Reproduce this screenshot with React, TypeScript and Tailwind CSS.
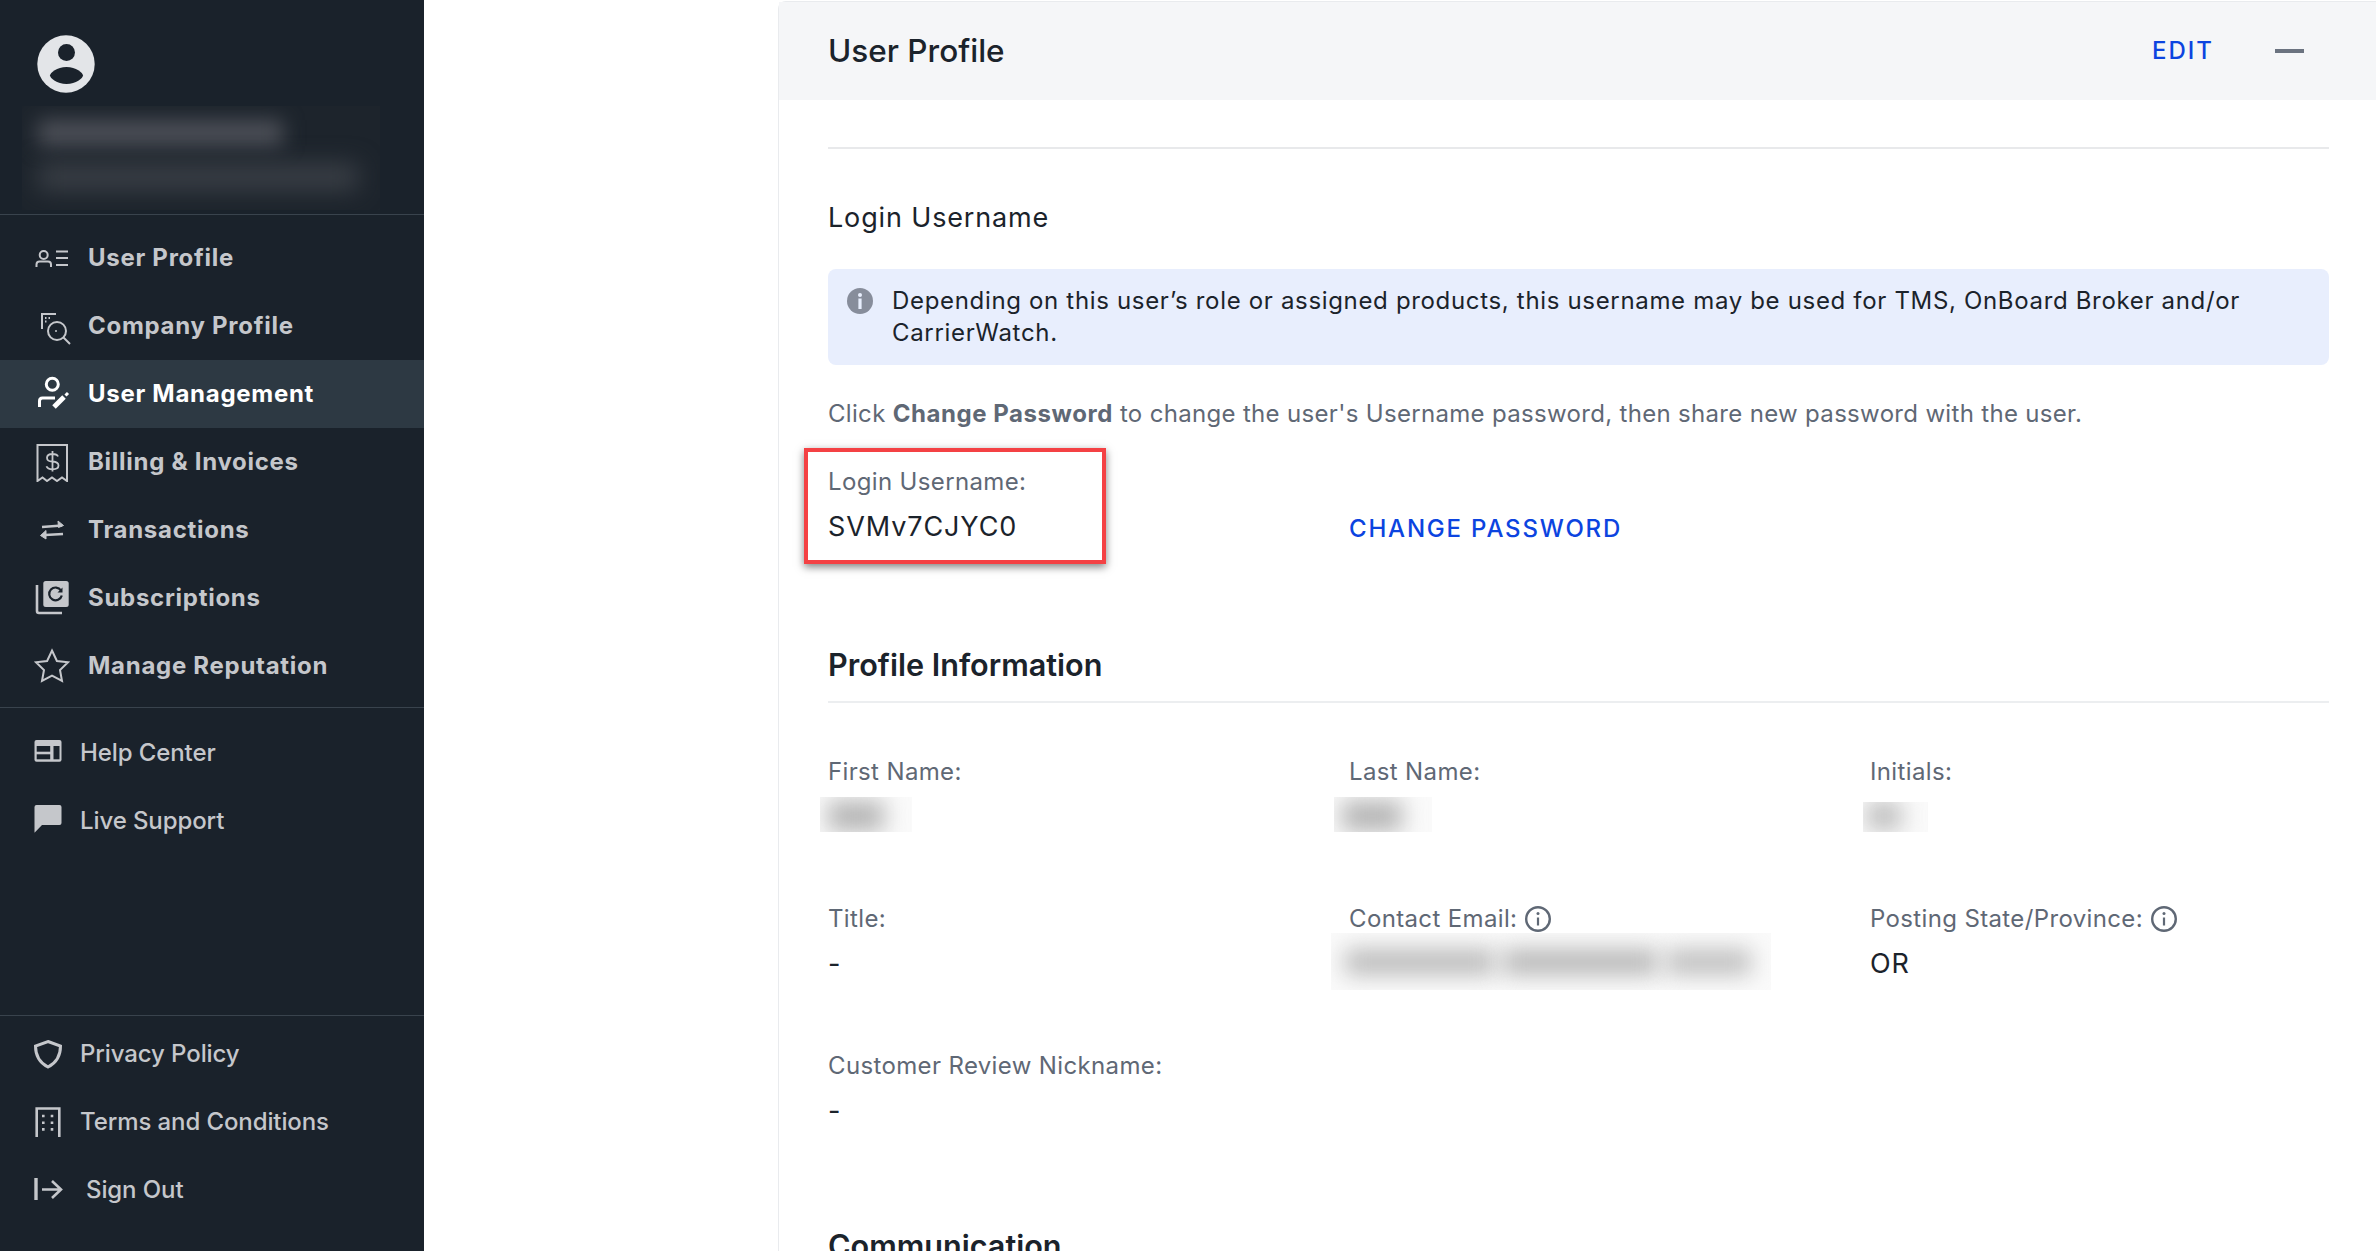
import React from "react";

const Ico = ({ children }: { children: React.ReactNode }) => (
  <svg width="40" height="40" viewBox="0 0 40 40" fill="none" stroke="currentColor" className="shrink-0">
    {children}
  </svg>
);

const icons: Record<string, React.ReactNode> = {
  profile: (
    <Ico>
      <circle cx="9.7" cy="17" r="4" strokeWidth="2" />
      <path d="M2.5 29v-2.5q0-3 3-3h8.5q3 0 3 3V29" strokeWidth="2" />
      <path d="M22 13.5h12M22 20h12M22 27h12" strokeWidth="2" />
    </Ico>
  ),
  company: (
    <Ico>
      <path d="M8 23V8h14" strokeWidth="2" />
      <path d="M11 12h1.5M14.5 12H16M11 15.5h1.5" strokeWidth="2" />
      <circle cx="23" cy="25" r="9" strokeWidth="2" />
      <circle cx="22" cy="25" r="1" fill="currentColor" stroke="none" />
      <path d="M29.5 31.5l6.5 6.5" strokeWidth="2" />
    </Ico>
  ),
  management: (
    <Ico>
      <circle cx="18.3" cy="10.3" r="6" strokeWidth="3" />
      <path d="M5.5 33v-6q0-3 3-3H21" strokeWidth="3" />
      <path d="M20 33l10-10" strokeWidth="5" />
      <path d="M31.5 21.5l2.5-2.5" strokeWidth="3" />
    </Ico>
  ),
  billing: (
    <Ico>
      <path d="M3.5 3H33V39l-5-3.5-5 3.5-5-3.5-5 3.5-4.5-3.5L3.5 39Z" strokeWidth="2" />
      <path d="M24 14.5q-1-2.5-5.5-2.5-5.5 0-5.5 3.8t5.5 3.7q6 .3 6 4t-6 3.8q-5 0-6-3M18.5 9v20.5" strokeWidth="1.8" />
    </Ico>
  ),
  transactions: (
    <Ico>
      <path d="M8 17l20-1.5" strokeWidth="2.6" />
      <path d="M24 11l5.5 4.5-5 2z" fill="currentColor" strokeWidth="1" />
      <path d="M29 24l-18 1" strokeWidth="2.6" />
      <path d="M12 20.5L6.5 25.5l5.5 3.5z" fill="currentColor" strokeWidth="1" />
    </Ico>
  ),
  subs: (
    <Ico>
      <rect x="9.3" y="3" width="25.4" height="26" rx="2.5" fill="currentColor" stroke="none" />
      <path d="M3 7v26a2 2 0 0 0 2 2h23" strokeWidth="2.6" />
      <path d="M27 12.5a6.4 6.4 0 1 0 .8 5" stroke="#1a222b" strokeWidth="2.2" />
      <path d="M28.5 9.5v5h-5z" fill="#1a222b" stroke="none" />
    </Ico>
  ),
  star: (
    <Ico>
      <path d="M18 4.5L22.9 15 34 16.2 26 24 28 35 18 29.7 8 35 10 24 2 16.2 13.1 15Z" strokeWidth="2" />
    </Ico>
  ),
  help: (
    <Ico>
      <rect x="0.5" y="7" width="27" height="21.7" rx="2" fill="currentColor" stroke="none" />
      <rect x="2.7" y="13" width="13.5" height="5.7" fill="#1a222b" stroke="none" />
      <rect x="2.7" y="21.3" width="13.5" height="5" fill="#1a222b" stroke="none" />
      <rect x="19.5" y="13" width="6" height="13.3" fill="#1a222b" stroke="none" />
    </Ico>
  ),
  chat: (
    <Ico>
      <path d="M2.5 4H25.5a2 2 0 0 1 2 2V22a2 2 0 0 1-2 2H8L.5 31.7V6a2 2 0 0 1 2-2Z" fill="currentColor" stroke="none" />
    </Ico>
  ),
  shield: (
    <Ico>
      <path d="M14 7.5L26.5 12C26.5 22 22 29 14 33 6 29 1.5 22 1.5 12Z" strokeWidth="3" />
    </Ico>
  ),
  terms: (
    <Ico>
      <path d="M2.7 35V6.5H25.3V35" strokeWidth="2.6" />
      <path d="M8 14h2.6M16.7 14h2.6M8 20.7h2.6M16.7 20.7h2.6M8 27.4h2.6M16.7 27.4h2.6" strokeWidth="2.6" />
    </Ico>
  ),
  signout: (
    <Ico>
      <path d="M2 8v22" strokeWidth="3.4" />
      <path d="M8 19.5h19M18 11l9 8.5-9 8.5" strokeWidth="2.6" />
    </Ico>
  ),
};

const Primary = ({ icon, label, active }: { icon: string; label: string; active?: boolean }) => (
  <div
    className={`flex h-[68px] items-center pl-[34px] text-[24px] font-bold tracking-[0.72px] ${
      active ? "bg-[#2d3943] text-white" : "text-[#c5c7cb]"
    }`}
  >
    {icons[icon]}
    <span className="ml-[14px]">{label}</span>
  </div>
);

const Secondary = ({ icon, label, gap }: { icon: string; label: string; gap?: string }) => (
  <div className="flex h-[68px] items-center pl-[34px] text-[24px] font-medium tracking-[-0.1px] text-[#c5c7cb]">
    {icons[icon]}
    <span className={gap ?? "ml-[6px]"}>{label}</span>
  </div>
);

const Blur = ({ className, bars }: { className: string; bars: string[] }) => (
  <div className={`relative overflow-hidden bg-[#fafafa] ${className}`}>
    {bars.map((b) => (
      <div key={b} className={`absolute blur-[11px] ${b}`} />
    ))}
  </div>
);

const Info = () => (
  <svg width="28" height="28" viewBox="0 0 28 28" fill="none" className="shrink-0 text-[#5f6875]" stroke="currentColor">
    <circle cx="14" cy="14" r="11.8" strokeWidth="2.4" />
    <path d="M14 12.5v8" strokeWidth="2.2" />
    <circle cx="14" cy="8.5" r="1.5" fill="currentColor" stroke="none" />
  </svg>
);

const Label = ({ children }: { children: React.ReactNode }) => (
  <div className="flex h-[32px] items-center gap-[7px] text-[24px] tracking-[0.36px] text-[#5f6875]">{children}</div>
);

const Value = ({ children }: { children: React.ReactNode }) => (
  <div className="mt-[13px] flex h-[32px] items-center text-[27px] tracking-[0.9px] text-[#1b232b]">{children}</div>
);

export default function App() {
  return (
    <div className="flex h-[1251px] w-[2376px] overflow-hidden bg-white font-['Inter',sans-serif]">
      <aside className="flex h-full w-[424px] shrink-0 flex-col bg-[#1a222b]">
        <div className="h-[215px] shrink-0 border-b border-[#39434d] pl-[37px] pt-[35px]">
          <svg width="58" height="58" viewBox="0 0 58 58">
            <circle cx="29" cy="29" r="28.7" fill="#e3e5e8" />
            <circle cx="29.5" cy="17.5" r="8.5" fill="#1a222b" />
            <path d="M29.5 32C39 32 46 38 46 40.5 46 43 39 49 29.5 49 20 49 13 43 13 40.5 13 38 20 32 29.5 32Z" fill="#1a222b" />
          </svg>
          <div className="relative -ml-[15px] mt-[13px] h-[104px] w-[358px] overflow-hidden bg-[#1d242c]">
            <div className="absolute left-[16px] top-[14px] h-[26px] w-[245px] bg-[#4d5058] blur-[10px]" />
            <div className="absolute left-[16px] top-[58px] h-[26px] w-[320px] bg-[#3b4047] blur-[12px]" />
          </div>
        </div>
        <nav className="shrink-0 pt-[9px]">
          <Primary icon="profile" label="User Profile" />
          <Primary icon="company" label="Company Profile" />
          <Primary icon="management" label="User Management" active />
          <Primary icon="billing" label="Billing & Invoices" />
          <Primary icon="transactions" label="Transactions" />
          <Primary icon="subs" label="Subscriptions" />
          <Primary icon="star" label="Manage Reputation" />
        </nav>
        <div className="mt-[7px] shrink-0 border-t border-[#39434d] pt-[11px]">
          <Secondary icon="help" label="Help Center" />
          <Secondary icon="chat" label="Live Support" />
        </div>
        <div className="mt-auto h-[236px] shrink-0 border-t border-[#39434d] pt-[4px]">
          <Secondary icon="shield" label="Privacy Policy" />
          <Secondary icon="terms" label="Terms and Conditions" />
          <Secondary icon="signout" label="Sign Out" gap="ml-[12px]" />
        </div>
      </aside>

      <main className="min-w-0 flex-1 pl-[354px] pt-[1px]">
        <section className="relative h-[1400px] rounded-tl-[8px] border-l border-t border-[#e9ebee]">
          <header className="flex h-[98px] items-center justify-between bg-[#f5f6f8] pl-[49px] pr-[72px]">
            <h1 className="text-[31.5px] font-medium text-[#1b232b]">User Profile</h1>
            <div className="flex items-center gap-[61px]">
              <span className="text-[24px] font-medium tracking-[2px] text-[#0c44e0]">EDIT</span>
              <span className="block h-[4px] w-[29px] bg-[#6b7380]" />
            </div>
          </header>
          <div className="ml-[49px] w-[1501px]">
            <div className="mt-[47px] h-[2px] bg-[#e8e9eb]" />
            <h2 className="mt-[51px] flex h-[36px] items-center text-[27px] tracking-[0.85px] text-[#1b232b]">Login Username</h2>
            <div className="mt-[33px] flex h-[96px] items-start gap-[18px] rounded-[8px] bg-[#e8eefd] pl-[18px] pt-[16px]">
              <svg width="28" height="28" viewBox="0 0 28 28" className="mt-[2px] shrink-0">
                <circle cx="14" cy="14" r="13" fill="#878d9b" />
                <circle cx="14" cy="8" r="2" fill="#e8eefd" />
                <rect x="12.4" y="11.5" width="3.2" height="10.5" fill="#e8eefd" />
              </svg>
              <p className="w-[1400px] text-[24px] leading-[32px] tracking-[0.67px] text-[#1b232b]">
                Depending on this user’s role or assigned products, this username may be used for TMS, OnBoard Broker and/or CarrierWatch.
              </p>
            </div>
            <p className="mt-[33px] h-[32px] text-[24px] leading-[32px] tracking-[0.32px] text-[#5f6875]">
              Click <strong className="font-bold tracking-[0.55px]">Change Password</strong> to change the user's Username password, then share new password with the user.
            </p>
            <div className="mt-[36px] grid grid-cols-[521px_1fr]">
              <div className="relative">
                <Label>Login Username:</Label>
                <Value>SVMv7CJYC0</Value>
                <div className="absolute -left-[24px] -top-[18px] h-[116px] w-[302px] border-[4px] border-[#f44144] shadow-[0_3px_8px_rgba(0,0,0,0.5)]" />
              </div>
              <div className="flex items-end">
                <span className="relative top-[2px] flex h-[32px] items-center text-[24px] font-medium tracking-[1.8px] text-[#0c44e0]">CHANGE PASSWORD</span>
              </div>
            </div>
            <h2 className="mt-[102px] flex h-[40px] items-center text-[30.6px] font-semibold text-[#1b232b]">Profile Information</h2>
            <div className="mt-[16px] h-[2px] bg-[#eceef0]" />
            <div className="mt-[53px] grid grid-cols-[521px_521px_1fr] auto-rows-[77px] gap-y-[70px]">
              <div>
                <Label>First Name:</Label>
                <Blur className="-ml-[8px] mt-[9px] h-[35px] w-[92px]" bars={["left-[8px] top-[4px] h-[30px] w-[56px] bg-[#b4b4b4]"]} />
              </div>
              <div>
                <Label>Last Name:</Label>
                <Blur className="-ml-[15px] mt-[9px] h-[35px] w-[98px]" bars={["left-[8px] top-[4px] h-[30px] w-[60px] bg-[#b4b4b4]"]} />
              </div>
              <div>
                <Label>Initials:</Label>
                <Blur className="-ml-[7px] mt-[14px] h-[30px] w-[65px]" bars={["left-[4px] top-[0px] h-[28px] w-[34px] bg-[#bcbcbc]"]} />
              </div>
              <div>
                <Label>Title:</Label>
                <Value>-</Value>
              </div>
              <div>
                <Label>
                  Contact Email:
                  <Info />
                </Label>
                <Blur
                  className="-ml-[18px] -mt-[2px] h-[57px] w-[440px]"
                  bars={[
                    "left-[14px] top-[16px] h-[26px] w-[150px] bg-[#bcbcbc]",
                    "left-[172px] top-[16px] h-[26px] w-[155px] bg-[#b8b8b8]",
                    "left-[335px] top-[16px] h-[26px] w-[85px] bg-[#c0c0c0]",
                  ]}
                />
              </div>
              <div>
                <Label>
                  Posting State/Province:
                  <Info />
                </Label>
                <Value>OR</Value>
              </div>
              <div>
                <Label>Customer Review Nickname:</Label>
                <Value>-</Value>
              </div>
            </div>
            <h2 className="mt-[99px] flex h-[40px] items-center text-[30.6px] font-semibold text-[#1b232b]">Communication</h2>
          </div>
        </section>
      </main>
    </div>
  );
}
